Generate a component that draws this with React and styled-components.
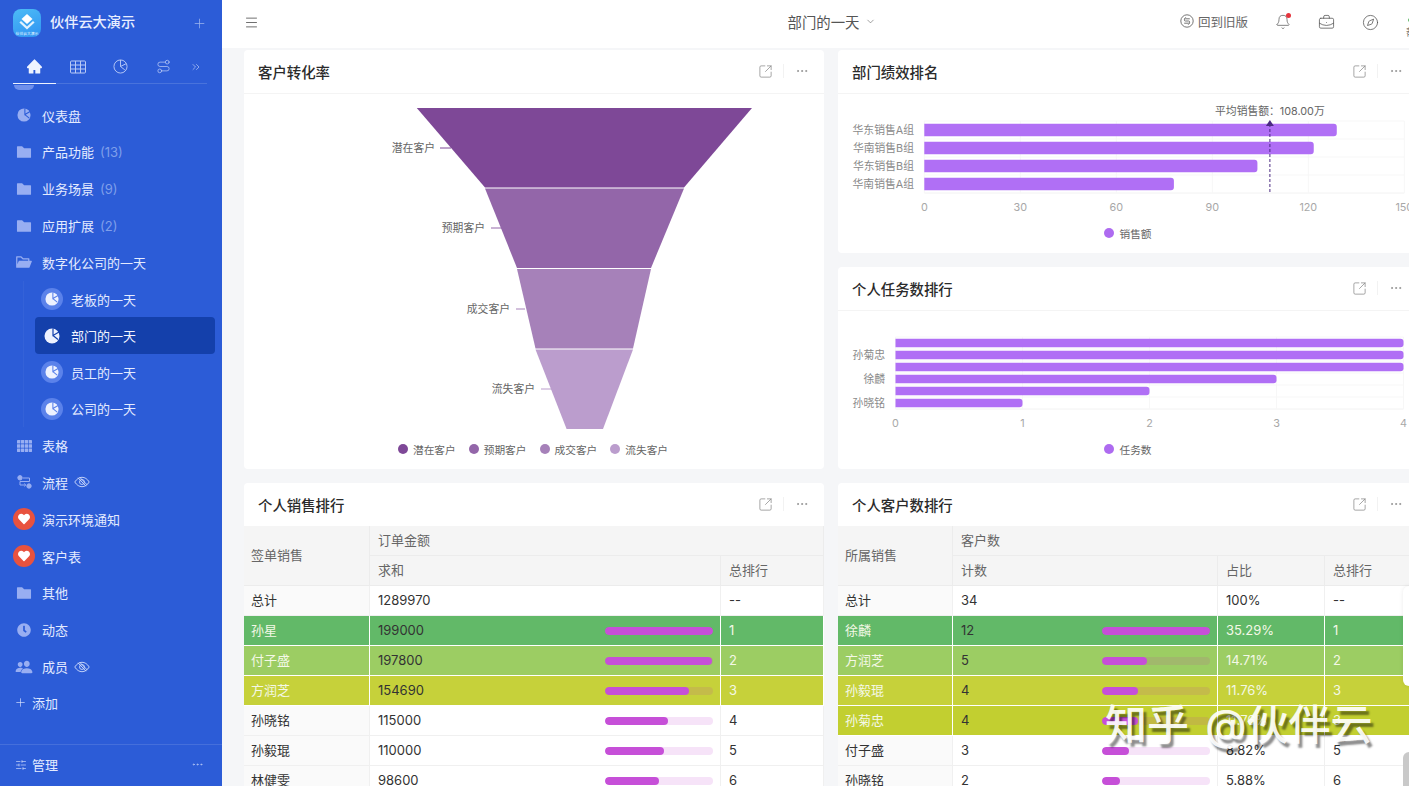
import * as React from "react"
import styled, { createGlobalStyle } from "styled-components"
import {
  Bell,
  BriefcaseBusiness,
  ChevronDown,
  ChevronsRight,
  Compass,
  Ellipsis,
  Menu,
  Plus,
  Route,
  SlidersHorizontal,
  SquareArrowOutUpRight,
} from "lucide-react"
import { AiFillFolder, AiFillFolderOpen, AiFillHome } from "react-icons/ai"
import { FaClock, FaHeart } from "react-icons/fa"
import { IoPeople } from "react-icons/io5"

const FONT = `Inter, "Noto Sans CJK SC", "Noto Sans", sans-serif`

const GlobalStyle = createGlobalStyle`
  html, body {
    margin: 0;
    height: 100%;
    overflow: hidden;
    background: #f5f6f8;
    font-family: ${FONT};
  }
  * { box-sizing: border-box; }
`

const Page = styled.div`
  position: relative;
  display: flex;
  width: 1440px;
  height: 786px;
  overflow: hidden;
`

/* sidebar */

const Sidebar = styled.aside`
  display: flex;
  flex-direction: column;
  flex: none;
  width: 222px;
  background: #2c5cd7;
  color: #e4ebff;
  font-size: 13px;
`

const Brand = styled.div`
  display: flex;
  align-items: center;
  height: 46px;
  padding: 0 15px 0 13px;
`

const BrandName = styled.div`
  flex: 1;
  margin: 0 0 4px 9px;
  font-size: 14.2px;
  font-weight: 500;
  color: #e8eeff;
`

const LogoBox = styled.div`
  width: 28px;
  height: 28px;
  border-radius: 8px;
  background: linear-gradient(160deg, #4dbcf6, #2e92f2);
`

const Tabs = styled.div`
  display: grid;
  grid-template-columns: repeat(4, 43px) 22px;
  align-items: center;
  height: 38px;
  margin: 0 15px 0 13px;
  border-bottom: 1px solid rgba(255, 255, 255, 0.14);
  color: #b9caf6;
`

const Tab = styled.div`
  display: flex;
  align-items: center;
  justify-content: center;
  height: 38px;
  margin-bottom: -1px;
  padding-top: 4px;
  color: ${(p) => (p.$active ? "#eef3ff" : "inherit")};
  border-bottom: 1.5px solid ${(p) => (p.$active ? "#eef3ff" : "transparent")};
`

const ScrolledIcon = styled.div`
  width: 20px;
  height: 5px;
  margin: 1px 0 6.6px 14px;
  border-radius: 0 0 10px 10px;
  background: #6f90ec;
`

const Nav = styled.nav`
  flex: 1;
  overflow: hidden;
`

const NavItem = styled.div`
  display: flex;
  align-items: center;
  height: 36.85px;
  padding-left: 13px;
`

const NavIcon = styled.span`
  display: flex;
  align-items: center;
  justify-content: center;
  flex: none;
  width: 22px;
  height: 22px;
  margin-right: 7px;
  color: #98aef2;
`

const Count = styled.span`
  margin-left: 6px;
  color: #7f9fea;
`

const HiddenMark = styled.span`
  display: flex;
  margin-left: 6px;
  color: #c9d6fa;
`

const HeartBadge = styled.span`
  display: flex;
  align-items: center;
  justify-content: center;
  width: 22px;
  height: 22px;
  border-radius: 50%;
  background: #e8523f;
  color: #fff;
`

const SubList = styled.div`
  margin-left: 23px;
  border-left: 1px solid rgba(255, 255, 255, 0.04);
`

const SubItem = styled.div`
  display: flex;
  align-items: center;
  width: 180px;
  height: 36.6px;
  margin-left: 11px;
  padding-left: 6px;
  border-radius: 4px;
  background: ${(p) => (p.$active ? "#1440ab" : "transparent")};
  color: ${(p) => (p.$active ? "#f2f5ff" : "inherit")};
`

const SubIcon = styled.span`
  display: flex;
  align-items: center;
  justify-content: center;
  flex: none;
  width: 22px;
  height: 22px;
  margin-right: 8px;
  border-radius: 50%;
  background: ${(p) => (p.$active ? "transparent" : "#5b82ea")};
  color: #eef2ff;
`

const AddRow = styled.div`
  display: flex;
  align-items: center;
  gap: 5px;
  height: 36px;
  margin-top: -1px;
  padding-left: 14px;
  color: #dfe7ff;
`

const SideFooter = styled.div`
  display: flex;
  align-items: center;
  gap: 5px;
  height: 42px;
  padding: 0 18px 2px 15px;
  border-top: 1px solid rgba(255, 255, 255, 0.12);
`

const FooterLabel = styled.span`
  flex: 1;
`

/* top bar */

const Main = styled.main`
  display: flex;
  flex-direction: column;
  flex: 1;
  min-width: 0;
`

const Topbar = styled.header`
  display: grid;
  grid-template-columns: 1fr auto 1fr;
  align-items: center;
  flex: none;
  height: 48px;
  padding-bottom: 4px;
  background: #fff;
  color: #666;
`

const MenuButton = styled.span`
  display: flex;
  margin-left: 22px;
`

const PageTitle = styled.div`
  display: flex;
  align-items: center;
  gap: 6px;
  margin: 0 0 2px 2px;
  font-size: 14.4px;
  color: #555;
`

const TopActions = styled.div`
  display: flex;
  align-items: center;
  justify-content: flex-end;
  gap: 27px;
  color: #555;
`

const BackLink = styled.div`
  display: flex;
  align-items: center;
  gap: 4px;
  margin-bottom: 2px;
  font-size: 12.5px;
  color: #666;
`

const BellWrap = styled.span`
  position: relative;
  display: flex;
  &::after {
    content: "";
    position: absolute;
    top: -1px;
    right: 0;
    width: 5px;
    height: 5px;
    border-radius: 50%;
    background: #e5343d;
  }
`

const HelpItem = styled.div`
  position: relative;
  width: 34px;
  padding-top: 18px;
  font-size: 10px;
  color: #777;
  &::before {
    content: "";
    position: absolute;
    top: 12px;
    left: 2px;
    width: 4px;
    height: 4px;
    border-radius: 50%;
    background: #62b968;
  }
`

/* dashboard */

const Board = styled.div`
  display: grid;
  grid-template-columns: 580px 580px;
  grid-template-rows: 203px 202px auto;
  gap: 14px;
  padding: 2px 22px 0;
`

const Card = styled.section`
  display: flex;
  flex-direction: column;
  grid-row: ${(p) => (p.$tall ? "span 2" : "auto")};
  border-radius: 4px;
  background: #fff;
  overflow: hidden;
`

const CardHead = styled.div`
  display: flex;
  align-items: center;
  flex: none;
  height: 44px;
  padding: 0 15px 1px 14px;
  border-bottom: 1px solid #f4f4f4;
  color: #8a8a8a;
`

const CardTitle = styled.h3`
  flex: 1;
  margin: 0;
  font-size: 14.4px;
  font-weight: 500;
  color: #2b2b2b;
`

const HeadDivider = styled.span`
  width: 1px;
  height: 14px;
  margin: 0 11px 0 10px;
  background: #f2f2f2;
`

const Chart = styled.svg`
  display: block;
  flex: none;
  width: 580px;
`

const ChartText = styled.text`
  font-family: ${FONT};
  font-size: 10.8px;
  fill: ${(p) => p.$color || "#8a8a8a"};
`

const Legend = styled.div`
  display: flex;
  align-items: center;
  justify-content: center;
  gap: 13px;
  height: 20px;
  padding: 0 ${(p) => p.$shift || 0}px 2px 0;
`

const LegendItem = styled.span`
  display: flex;
  align-items: center;
  gap: 5px;
  font-size: 10.7px;
  color: #666;
  &::before {
    content: "";
    width: 10px;
    height: 10px;
    border-radius: 50%;
    background: ${(p) => p.$color};
  }
`

const Table = styled.table`
  width: 100%;
  margin-top: -1px;
  border-collapse: separate;
  border-spacing: 0;
  table-layout: fixed;
  font-size: 13px;
`

const HeadCell = styled.th`
  height: 30px;
  padding: 0 8px 2px ${(p) => (p.$lead ? 7 : 8)}px;
  border-right: 1px solid #ececec;
  border-bottom: 1px solid #ececec;
  background: #f5f5f5;
  font-weight: 400;
  text-align: left;
  color: #666;
`

const TONES = {
  first: "#62b968",
  second: "#9ccd63",
  third: "#c6d13a",
  fourth: "#c2cf30",
}

const Cell = styled.td`
  height: 30px;
  padding: 0 8px 2px;
  border-right: 1px solid ${(p) => (p.$tone ? "#fff" : "#f0f0f0")};
  border-bottom: 1px solid ${(p) => (p.$tone ? "#fff" : "#f0f0f0")};
  background: ${(p) => TONES[p.$tone] || (p.$name ? "#fafafa" : "#fff")};
  color: ${(p) => (p.$tone && !p.$value ? "#f4f8e6" : "#333")};
  overflow: hidden;
  white-space: nowrap;
`

const NameCell = styled(Cell)`
  padding-left: 7px;
`

const ValueRow = styled.div`
  display: flex;
  align-items: center;
  justify-content: space-between;
`

const Meter = styled.div`
  width: 108px;
  height: 8px;
  margin: 2px -1px 0 0;
  border-radius: 4px;
  background: ${(p) => (p.$tone ? "rgba(190, 90, 150, 0.18)" : "#f6e3f8")};
  overflow: hidden;
`

const MeterFill = styled.div`
  height: 100%;
  border-radius: 4px;
  background: #c64fd8;
`

/* overlays */

const Watermark = styled.div`
  position: absolute;
  top: 697px;
  left: 1105px;
  font-size: 42px;
  font-weight: 500;
  line-height: 56px;
  word-spacing: 5px;
  white-space: nowrap;
  color: rgba(255, 255, 255, 0.92);
  text-shadow: 3px 4px 2px rgba(0, 0, 0, 0.45);
  pointer-events: none;
`

const FloatTab = styled.div`
  position: absolute;
  top: 586px;
  left: 1403px;
  width: 30px;
  height: 100px;
  border-radius: 6px 0 0 6px;
  background: #fff;
  box-shadow: 0 0 4px rgba(0, 0, 0, 0.08);
`

const ScrollThumb = styled.div`
  position: absolute;
  top: 752px;
  left: 1403px;
  width: 30px;
  height: 34px;
  border-radius: 6px 0 0 0;
  background: #c9c9c9;
`

/* icons */

const LogoMark = () => (
  <svg viewBox="0 0 28 28" width="28" height="28">
    <path d="M14 5l5.5 5-5.5 5-5.5-5z" fill="#fff" />
    <path d="M8 12l6 5.6 6-5.6 1.6 1.6L14 20.6l-7.6-7z" fill="#fff" opacity=".85" />
    <text x="14" y="26" textAnchor="middle" fontSize="3.8" fill="#e8f6ff" fontFamily={FONT}>
      伙伴云大演示
    </text>
  </svg>
)

const GridOutline = () => (
  <svg viewBox="0 0 16 14" width="16" height="14" fill="none" stroke="currentColor" strokeWidth="1">
    <rect x="0.5" y="1" width="15" height="12" rx="1" />
    <path d="M0.5 5h15M0.5 9h15M5.5 1v12M10.5 1v12" />
  </svg>
)

const PieOutline = () => (
  <svg viewBox="0 0 16 16" width="15" height="15" fill="none" stroke="currentColor" strokeWidth="1">
    <circle cx="8" cy="8" r="7" />
    <path d="M8 1v7l4.6 3.6M8 8l6-3" />
  </svg>
)

const PieSolid = ({ size = 14, cut = "#2c5cd7" }) => (
  <svg viewBox="0 0 16 16" width={size} height={size}>
    <circle cx="8" cy="8" r="7.5" fill="currentColor" />
    <path d="M9 0.5V7.5L15 4M9 7.5l5 4" fill="none" stroke={cut} strokeWidth="1.2" />
  </svg>
)

const TableSolid = () => (
  <svg viewBox="0 0 15 12" width="15" height="12" fill="currentColor">
    {[0, 4.2, 8.4].map((y) =>
      [0, 3.9, 7.8, 11.7].map((x) => <rect key={`${x}-${y}`} x={x} y={y} width="3.3" height="3.6" rx="0.4" />)
    )}
  </svg>
)

const FlowIcon = () => (
  <svg viewBox="0 0 15 14" width="15" height="14" fill="none" stroke="currentColor" strokeWidth="1">
    <circle cx="3" cy="2.8" r="2.2" fill="currentColor" />
    <circle cx="12" cy="11" r="2.2" fill="currentColor" />
    <path d="M6 3h6.5v3.5H3V10h5.5M7.3 8.6L8.8 10l-1.5 1.4" />
  </svg>
)

const EyeSlash = () => (
  <svg viewBox="0 0 17 12" width="16" height="12" fill="none" stroke="currentColor" strokeWidth="1">
    <path d="M0.8 6C3 2.6 5.6 1 8.5 1s5.5 1.6 7.7 5c-2.2 3.4-4.8 5-7.7 5S3 9.4 0.8 6z" />
    <circle cx="8.5" cy="6" r="2.6" />
    <path d="M4.2 1.6l8.6 8.8M6 0.9l8.2 8.4" />
  </svg>
)

const SwapCircle = () => (
  <svg viewBox="0 0 14 14" width="14" height="14" fill="none" stroke="currentColor" strokeWidth="0.9">
    <circle cx="7" cy="7" r="6.2" />
    <path d="M9.8 4.8H5.4C3.9 4.8 3.9 7 5.4 7h3.2c1.5 0 1.5 2.2 0 2.2H4.2M5.8 3.3L4.3 4.8M8.2 10.7l1.5-1.5" />
  </svg>
)

const CardHeader = ({ title }) => (
  <CardHead>
    <CardTitle>{title}</CardTitle>
    <SquareArrowOutUpRight size={15} strokeWidth={1.2} />
    <HeadDivider />
    <Ellipsis size={14} strokeWidth={1.4} />
  </CardHead>
)

/* charts */

const FUNNEL = [
  { name: "潜在客户", color: "#7e4897", pts: "416.8,108 752,108 684,187.5 485,187.5", y: 148, tx: 435, l: [440, 451] },
  { name: "预期客户", color: "#9366a9", pts: "485,188.5 684,188.5 651,268 517,268", y: 228, tx: 485, l: [491, 503] },
  { name: "成交客户", color: "#a681b9", pts: "517,269 651,269 633,348.5 535.5,348.5", y: 309, tx: 510, l: [516, 525] },
  { name: "流失客户", color: "#bb9dcd", pts: "535.5,349.5 633,349.5 603,429 566.6,429", y: 389, tx: 535, l: [541, 552] },
]

const FunnelChart = () => (
  <>
    <Chart viewBox="244 94 580 346" height="346">
      {FUNNEL.map((s) => (
        <g key={s.name}>
          <polygon points={s.pts} fill={s.color} />
          <line x1={s.l[0]} x2={s.l[1]} y1={s.y} y2={s.y} stroke={s.color} />
          <ChartText x={s.tx} y={s.y + 4} textAnchor="end" $color="#666">
            {s.name}
          </ChartText>
        </g>
      ))}
    </Chart>
    <Legend $shift={2}>
      {FUNNEL.map((s) => (
        <LegendItem key={s.name} $color={s.color}>
          {s.name}
        </LegendItem>
      ))}
    </Legend>
  </>
)

const barPath = (x, y, w, h, r) =>
  `M${x} ${y}h${w - r}a${r} ${r} 0 0 1 ${r} ${r}v${h - 2 * r}a${r} ${r} 0 0 1 ${-r} ${r}h${r - w}z`

const BarChart = ({ box, height, x0, unit, ticks, top, rowH, barH, rows, labelX, axisY, avg }) => {
  const bottom = top + rowH * rows.length
  const xOf = (t) => x0 + t * unit
  return (
    <Chart viewBox={`838 ${box} 580 ${height}`} height={height}>
      {rows.map((_, i) => (
        <line key={i} x1={x0} x2={xOf(ticks[ticks.length - 1])} y1={top + i * rowH} y2={top + i * rowH} stroke="#f7f7f7" />
      ))}
      <line x1={x0} x2={xOf(ticks[ticks.length - 1])} y1={bottom} y2={bottom} stroke="#f2f2f2" />
      {ticks.map((t) => (
        <g key={t}>
          <line x1={xOf(t)} x2={xOf(t)} y1={top} y2={bottom} stroke="#f7f7f7" />
          <ChartText x={xOf(t)} y={axisY} textAnchor="middle" $color="#a8a8a8">
            {t}
          </ChartText>
        </g>
      ))}
      {rows.map((r, i) => (
        <g key={i}>
          <path d={barPath(x0, top + i * rowH + (rowH - barH) / 2, r.value * unit, barH, 3)} fill="#b06ff5" />
          {r.label && (
            <ChartText x={labelX} y={top + i * rowH + rowH / 2 + 4} textAnchor="end">
              {r.label}
            </ChartText>
          )}
        </g>
      ))}
      {avg && (
        <g>
          <line x1={xOf(avg)} x2={xOf(avg)} y1={124} y2={bottom} stroke="#4b2a83" strokeDasharray="3 2" />
          <polygon points={`${xOf(avg)},120 ${xOf(avg) + 4},126 ${xOf(avg) - 4},126`} fill="#4b2a83" />
          <ChartText x={xOf(avg)} y={115} textAnchor="middle" $color="#666">
            平均销售额：108.00万
          </ChartText>
        </g>
      )}
    </Chart>
  )
}

/* tables */

const salesRows = [
  ["孙星", 199000, 100, "1", "first"],
  ["付子盛", 197800, 99.4, "2", "second"],
  ["方润芝", 154690, 78, "3", "third"],
  ["孙晓铭", 115000, 58, "4"],
  ["孙毅琨", 110000, 55, "5"],
  ["林健雯", 98600, 50, "6"],
]

const customerRows = [
  ["徐麟", 12, 100, "35.29%", "1", "first"],
  ["方润芝", 5, 42, "14.71%", "2", "second"],
  ["孙毅琨", 4, 33, "11.76%", "3", "third"],
  ["孙菊忠", 4, 33, "11.76%", "3", "fourth"],
  ["付子盛", 3, 25, "8.82%", "5"],
  ["孙晓铭", 2, 17, "5.88%", "6"],
]

const ValueCell = ({ value, pct, tone }) => (
  <Cell $tone={tone} $value>
    <ValueRow>
      {value}
      <Meter $tone={tone}>
        <MeterFill style={{ width: `${pct}%` }} />
      </Meter>
    </ValueRow>
  </Cell>
)

const SalesTable = () => (
  <Table>
    <colgroup>
      <col width="126" />
      <col width="351" />
      <col />
    </colgroup>
    <thead>
      <tr>
        <HeadCell $lead rowSpan={2}>签单销售</HeadCell>
        <HeadCell colSpan={2}>订单金额</HeadCell>
      </tr>
      <tr>
        <HeadCell>求和</HeadCell>
        <HeadCell>总排行</HeadCell>
      </tr>
    </thead>
    <tbody>
      <tr>
        <NameCell $name>总计</NameCell>
        <Cell>1289970</Cell>
        <Cell>--</Cell>
      </tr>
      {salesRows.map(([name, value, pct, rank, tone]) => (
        <tr key={name}>
          <NameCell $name $tone={tone}>{name}</NameCell>
          <ValueCell value={value} pct={pct} tone={tone} />
          <Cell $tone={tone}>{rank}</Cell>
        </tr>
      ))}
    </tbody>
  </Table>
)

const CustomerTable = () => (
  <Table>
    <colgroup>
      <col width="115" />
      <col width="265" />
      <col width="107" />
      <col />
    </colgroup>
    <thead>
      <tr>
        <HeadCell $lead rowSpan={2}>所属销售</HeadCell>
        <HeadCell colSpan={3}>客户数</HeadCell>
      </tr>
      <tr>
        <HeadCell>计数</HeadCell>
        <HeadCell>占比</HeadCell>
        <HeadCell>总排行</HeadCell>
      </tr>
    </thead>
    <tbody>
      <tr>
        <NameCell $name>总计</NameCell>
        <Cell>34</Cell>
        <Cell>100%</Cell>
        <Cell>--</Cell>
      </tr>
      {customerRows.map(([name, value, pct, share, rank, tone]) => (
        <tr key={name}>
          <NameCell $name $tone={tone}>{name}</NameCell>
          <ValueCell value={value} pct={pct} tone={tone} />
          <Cell $tone={tone}>{share}</Cell>
          <Cell $tone={tone}>{rank}</Cell>
        </tr>
      ))}
    </tbody>
  </Table>
)

const SideNav = () => (
  <Sidebar>
    <Brand>
      <LogoBox>
        <LogoMark />
      </LogoBox>
      <BrandName>伙伴云大演示</BrandName>
      <Plus size={15} strokeWidth={1.2} color="#9db6ee" />
    </Brand>
    <Tabs>
      <Tab $active><AiFillHome size={17} /></Tab>
      <Tab><GridOutline /></Tab>
      <Tab><PieOutline /></Tab>
      <Tab><Route size={15} strokeWidth={1.2} /></Tab>
      <Tab><ChevronsRight size={12} strokeWidth={1.4} /></Tab>
    </Tabs>
    <ScrolledIcon />
    <Nav>
      <NavItem><NavIcon><PieSolid /></NavIcon>仪表盘</NavItem>
      <NavItem><NavIcon><AiFillFolder size={18} /></NavIcon>产品功能<Count>(13)</Count></NavItem>
      <NavItem><NavIcon><AiFillFolder size={18} /></NavIcon>业务场景<Count>(9)</Count></NavItem>
      <NavItem><NavIcon><AiFillFolder size={18} /></NavIcon>应用扩展<Count>(2)</Count></NavItem>
      <NavItem><NavIcon><AiFillFolderOpen size={18} /></NavIcon>数字化公司的一天</NavItem>
      <SubList>
        <SubItem><SubIcon><PieSolid cut="#5b82ea" /></SubIcon>老板的一天</SubItem>
        <SubItem $active><SubIcon $active><PieSolid size={16} cut="#1440ab" /></SubIcon>部门的一天</SubItem>
        <SubItem><SubIcon><PieSolid cut="#5b82ea" /></SubIcon>员工的一天</SubItem>
        <SubItem><SubIcon><PieSolid cut="#5b82ea" /></SubIcon>公司的一天</SubItem>
      </SubList>
      <NavItem><NavIcon><TableSolid /></NavIcon>表格</NavItem>
      <NavItem>
        <NavIcon><FlowIcon /></NavIcon>流程
        <HiddenMark><EyeSlash /></HiddenMark>
      </NavItem>
      <NavItem><NavIcon><HeartBadge><FaHeart size={12} /></HeartBadge></NavIcon>演示环境通知</NavItem>
      <NavItem><NavIcon><HeartBadge><FaHeart size={12} /></HeartBadge></NavIcon>客户表</NavItem>
      <NavItem><NavIcon><AiFillFolder size={18} /></NavIcon>其他</NavItem>
      <NavItem><NavIcon><FaClock size={14} /></NavIcon>动态</NavItem>
      <NavItem>
        <NavIcon><IoPeople size={18} /></NavIcon>成员
        <HiddenMark><EyeSlash /></HiddenMark>
      </NavItem>
      <AddRow><Plus size={13} strokeWidth={1.2} />添加</AddRow>
    </Nav>
    <SideFooter>
      <SlidersHorizontal size={12} strokeWidth={1.2} />
      <FooterLabel>管理</FooterLabel>
      <Ellipsis size={13} strokeWidth={1.4} color="#b9caf6" />
    </SideFooter>
  </Sidebar>
)

const App = () => (
  <>
    <GlobalStyle />
    <Page>
      <SideNav />
      <Main>
        <Topbar>
          <MenuButton><Menu size={15} strokeWidth={1.5} /></MenuButton>
          <PageTitle>
            部门的一天
            <ChevronDown size={11} strokeWidth={1.2} />
          </PageTitle>
          <TopActions>
            <BackLink><SwapCircle />回到旧版</BackLink>
            <BellWrap><Bell size={16} strokeWidth={1.1} /></BellWrap>
            <BriefcaseBusiness size={17} strokeWidth={1.1} />
            <Compass size={17} strokeWidth={1.1} />
            <HelpItem>帮助</HelpItem>
          </TopActions>
        </Topbar>
        <Board>
          <Card $tall>
            <CardHeader title="客户转化率" />
            <FunnelChart />
          </Card>
          <Card>
            <CardHeader title="部门绩效排名" />
            <BarChart
              box={94}
              height={130}
              x0={924.3}
              unit={3.2}
              ticks={[0, 30, 60, 90, 120, 150]}
              top={121}
              rowH={18}
              barH={12.4}
              labelX={914}
              axisY={211}
              avg={108}
              rows={[
                { label: "华东销售A组", value: 128.9 },
                { label: "华南销售B组", value: 121.7 },
                { label: "华东销售B组", value: 104.1 },
                { label: "华南销售A组", value: 78 },
              ]}
            />
            <Legend><LegendItem $color="#ae6bf0">销售额</LegendItem></Legend>
          </Card>
          <Card>
            <CardHeader title="个人任务数排行" />
            <BarChart
              box={311}
              height={129}
              x0={895.5}
              unit={127}
              ticks={[0, 1, 2, 3, 4]}
              top={337}
              rowH={12}
              barH={8.4}
              labelX={885}
              axisY={427}
              rows={[
                { value: 4 },
                { label: "孙菊忠", value: 4 },
                { value: 4 },
                { label: "徐麟", value: 3 },
                { value: 2 },
                { label: "孙晓铭", value: 1 },
              ]}
            />
            <Legend><LegendItem $color="#ae6bf0">任务数</LegendItem></Legend>
          </Card>
          <Card>
            <CardHeader title="个人销售排行" />
            <SalesTable />
          </Card>
          <Card>
            <CardHeader title="个人客户数排行" />
            <CustomerTable />
          </Card>
        </Board>
      </Main>
      <FloatTab />
      <ScrollThumb />
      <Watermark>知乎 @伙伴云</Watermark>
    </Page>
  </>
)

export default App
